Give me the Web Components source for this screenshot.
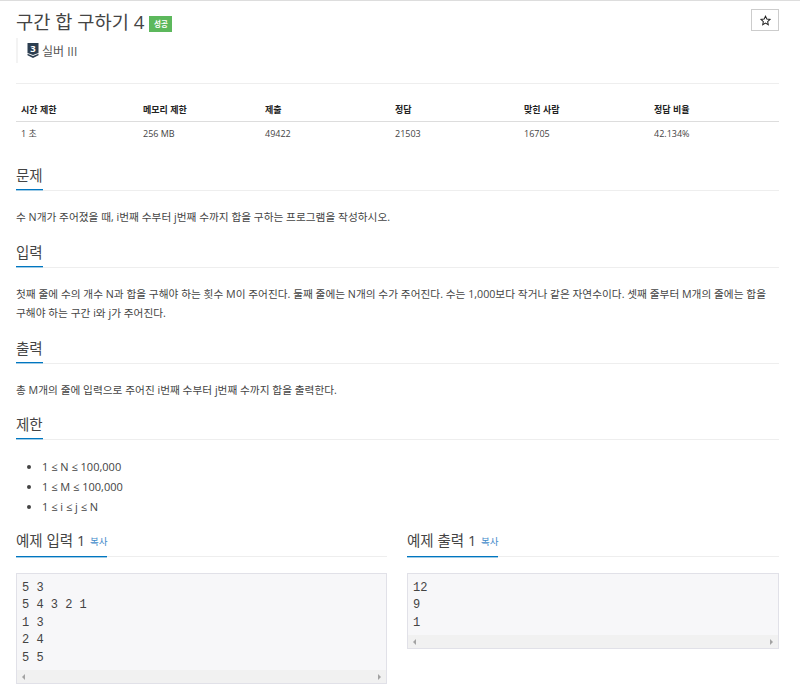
<!DOCTYPE html>
<html lang="ko">
<head>
<meta charset="utf-8">
<title>구간 합 구하기 4</title>
<style>
	html, body { margin: 0; background: #fff; }
	body {
		border-top: 1px solid #ddd;
		color: #444;
		font-family: "Open Sans", "Noto Sans CJK KR", sans-serif;
		font-size: 10.700px;
		height: 691px;
		overflow: hidden;
		word-break: keep-all;
	}
	.samples {
		display: grid;
		gap: 20px;
		grid-template-columns: 371px 372px;
	}
	ul { font-size: 11px; margin: 0; padding: 0 0 0 26px; }
	li { height: 20px; line-height: 20px; }
	p { margin: 0; line-height: 19.500px; }
</style>
</head>
<body>
<boj-problem>
	<boj-head title-text="구간 합 구하기 4" result="성공" tier="3" tier-name="실버 III"></boj-head>
	<boj-stats></boj-stats>
	<boj-section label="문제">
		<p>수 N개가 주어졌을 때, i번째 수부터 j번째 수까지 합을 구하는 프로그램을 작성하시오.</p>
	</boj-section>
	<boj-section label="입력">
		<p>첫째 줄에 수의 개수 N과 합을 구해야 하는 횟수 M이 주어진다. 둘째 줄에는 N개의 수가 주어진다. 수는 1,000보다 작거나 같은 자연수이다. 셋째 줄부터 M개의 줄에는 합을 구해야 하는 구간 i와 j가 주어진다.</p>
	</boj-section>
	<boj-section label="출력">
		<p>총 M개의 줄에 입력으로 주어진 i번째 수부터 j번째 수까지 합을 출력한다.</p>
	</boj-section>
	<boj-section label="제한">
		<ul>
			<li>1 ≤ N ≤ 100,000</li>
			<li>1 ≤ M ≤ 100,000</li>
			<li>1 ≤ i ≤ j ≤ N</li>
		</ul>
	</boj-section>
	<div class="samples">
		<boj-sample label="예제 입력 1">5 3
5 4 3 2 1
1 3
2 4
5 5</boj-sample>
		<boj-sample label="예제 출력 1">12
9
1</boj-sample>
	</div>
</boj-problem>

<script>
class BojProblem extends HTMLElement {
	constructor() {
		super();
		this.attachShadow({ mode: 'open' });
		this.shadowRoot.innerHTML = `
			<style>
				:host {
					display: block;
					padding: 0 21px 0 16px;
				}
			</style>
			<slot></slot>
		`;
	}
}

class BojHead extends HTMLElement {
	constructor() {
		super();
		this.attachShadow({ mode: 'open' });
		this.shadowRoot.innerHTML = `
			<style>
				:host {
					border-bottom: 1px solid #eee;
					display: block;
					height: 82px;
					position: relative;
				}
				.title {
					align-items: flex-start;
					display: flex;
					gap: 5px;
					padding-top: 7px;
				}
				h1 {
					color: #444;
					font-size: 18.700px;
					font-weight: 400;
					line-height: 27px;
					margin: 0;
				}
				.label {
					background: #5cb85c;
					color: #fff;
					font-size: 7.500px;
					font-weight: 700;
					height: 16px;
					line-height: 16px;
					margin-top: 8px;
					text-align: center;
					width: 23px;
				}
				.tier {
					align-items: center;
					border-left: 2px solid #f3f3f3;
					color: #555;
					display: flex;
					font-size: 12px;
					gap: 3px;
					height: 25px;
					margin-top: 3px;
					padding-left: 9px;
				}
				button {
					background: #fff;
					border: 1px solid #ccc;
					height: 22px;
					padding: 0;
					position: absolute;
					right: 0;
					top: 8px;
					width: 28px;
				}
				svg { display: block; overflow: visible; }
				button svg { margin: auto; }
			</style>
			<div class="title">
				<h1>${this.getAttribute('title-text')}</h1>
				<span class="label">${this.getAttribute('result')}</span>
			</div>
			<div class="tier">
				<svg width="12" height="15" viewBox="0 0 12 15">
					<path d="M0.500 0h11v10l-5.500 2-5.500-2z" fill="#2c3e50"/>
					<path d="M0.500 10.800l5.500 2.200 5.500-2.200v1.500l-5.500 2.700-5.500-2.700z" fill="#2c3e50"/>
					<text x="6" y="8.800" fill="#fff" font-size="9.500" font-weight="700" text-anchor="middle">${this.getAttribute('tier')}</text>
				</svg>
				<span>${this.getAttribute('tier-name')}</span>
			</div>
			<button aria-label="즐겨찾기">
				<svg width="11" height="11" viewBox="0 0 24 24">
					<path d="M12 2.500l2.900 6.300 6.900.8-5.100 4.700 1.400 6.800-6.100-3.400-6.100 3.400 1.400-6.800-5.100-4.700 6.900-.8z" fill="none" stroke="#222" stroke-width="2.200"/>
				</svg>
			</button>
		`;
	}
}

class BojStats extends HTMLElement {
	constructor() {
		super();
		this.attachShadow({ mode: 'open' });
		const cols = [
			['시간 제한', '1 초'],
			['메모리 제한', '256 MB'],
			['제출', '49422'],
			['정답', '21503'],
			['맞힌 사람', '16705'],
			['정답 비율', '42.134%'],
		];
		this.shadowRoot.innerHTML = `
			<style>
				:host {
					display: grid;
					font-size: 9px;
					grid-template-columns: 122px 122px 130px 129px 130px 130px;
					margin: 15px 0 21px;
				}
				div { padding-left: 5px; }
				.th {
					border-bottom: 1px solid #ddd;
					color: #222;
					font-weight: 700;
					height: 22px;
					line-height: 22px;
				}
				.td { color: #444; height: 23px; line-height: 23px; }
			</style>
			${cols.map((c) => `<div class="th">${c[0]}</div>`).join('')}
			${cols.map((c) => `<div class="td">${c[1]}</div>`).join('')}
		`;
	}
}

class BojSection extends HTMLElement {
	constructor() {
		super();
		this.attachShadow({ mode: 'open' });
		this.shadowRoot.innerHTML = `
			<style>
				:host { display: block; margin-top: 15px; }
				.headline { border-bottom: 1px solid #eee; height: 24px; }
				h2 {
					border-bottom: 1px solid #0076c0;
					box-shadow: 0 1px 0 #9fcbe6;
					color: #444;
					display: inline-block;
					font-size: 14.500px;
					font-weight: 400;
					line-height: 20px;
					margin: 0;
					padding-bottom: 3px;
				}
				.body { padding-top: 17px; }
			</style>
			<div class="headline"><h2>${this.getAttribute('label')}</h2></div>
			<div class="body"><slot></slot></div>
		`;
	}
}

class BojSample extends HTMLElement {
	constructor() {
		super();
		this.attachShadow({ mode: 'open' });
		this.shadowRoot.innerHTML = `
			<style>
				:host { display: block; margin-top: 14px; }
				.headline { border-bottom: 1px solid #eee; height: 25px; }
				h2 {
					border-bottom: 1px solid #0076c0;
					box-shadow: 0 1px 0 #9fcbe6;
					color: #444;
					display: inline-block;
					font-size: 14.500px;
					font-weight: 400;
					line-height: 20px;
					margin: 0;
					padding-bottom: 4px;
				}
				a {
					color: #428bca;
					font-size: 9.500px;
					margin-left: 1px;
					vertical-align: 1px;
				}
				.box {
					background: #f7f7f9;
					border: 1px solid #e1e1e8;
					margin-top: 16px;
				}
				pre {
					color: #444;
					font-family: "Liberation Mono", "DejaVu Sans Mono", monospace;
					font-size: 12px;
					line-height: 17.400px;
					margin: 0;
					padding: 6px 5px 3px;
				}
				.bar {
					align-items: center;
					background: #f1f1f1;
					display: flex;
					height: 13px;
					justify-content: space-between;
					padding: 0 5px;
				}
				.bar i {
					border-bottom: 3px solid transparent;
					border-top: 3px solid transparent;
				}
				.bar i:first-child { border-right: 3px solid #a3a3a3; }
				.bar i:last-child { border-left: 3px solid #a3a3a3; }
			</style>
			<div class="headline"><h2>${this.getAttribute('label')} <a>복사</a></h2></div>
			<div class="box">
				<pre><slot></slot></pre>
				<div class="bar"><i></i><i></i></div>
			</div>
		`;
	}
}

customElements.define('boj-problem', BojProblem);
customElements.define('boj-head', BojHead);
customElements.define('boj-stats', BojStats);
customElements.define('boj-section', BojSection);
customElements.define('boj-sample', BojSample);
</script>
</body>
</html>
